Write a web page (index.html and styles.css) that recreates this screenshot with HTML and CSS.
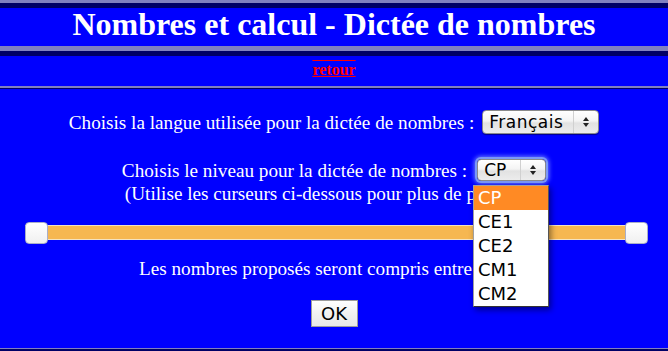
FILE: index.html
```html
<!DOCTYPE html>
<html lang="fr">
<head>
<meta charset="utf-8">
<title>Nombres et calcul - Dictée de nombres</title>
<link rel="stylesheet" href="styles.css">
</head>
<body>
<div class="rule rule-top"></div>
<h1 class="title">Nombres et calcul - Dictée de nombres</h1>
<div class="rule rule-mid"></div>
<div class="nav"><a href="#" class="back">retour</a></div>
<div class="rule rule-thin"></div>
<main class="content">
  <div class="row row-lang">
    <span class="label">Choisis la langue utilisée pour la dictée de nombres :</span>
    <div class="select select-lang">
      <span class="select-value">Français</span>
      <span class="select-arrows"><svg width="8" height="12" viewBox="0 0 8 12"><path d="M4 1 L7 5 H1 Z M4 11 L7 7 H1 Z" fill="#222"/></svg></span>
    </div>
  </div>
  <div class="row row-level">
    <span class="label">Choisis le niveau pour la dictée de nombres :</span>
    <div class="select select-level">
      <span class="select-value">CP</span>
      <span class="select-arrows"><svg width="8" height="12" viewBox="0 0 8 12"><path d="M4 1 L7 5 H1 Z M4 11 L7 7 H1 Z" fill="#222"/></svg></span>
    </div>
  </div>
  <p class="hint">(Utilise les curseurs ci-dessous pour plus de précision)</p>
  <div class="slider">
    <div class="track"></div>
    <span class="thumb thumb-min"></span>
    <span class="thumb thumb-max"></span>
  </div>
  <p class="range-text">Les nombres proposés seront compris entre 0 et 99</p>
  <button class="ok" type="button">OK</button>
</main>
<div class="rule rule-bottom"></div>
<ul class="dropdown">
  <li class="option active">CP</li>
  <li class="option">CE1</li>
  <li class="option">CE2</li>
  <li class="option">CM1</li>
  <li class="option">CM2</li>
</ul>
</body>
</html>
```
FILE: styles.css
```css
html, body {
  margin: 0;
  padding: 0;
}
body {
  background: #0000ff;
  position: relative;
  height: 351px;
  overflow: hidden;
  font-family: "Liberation Serif", "Times New Roman", serif;
  color: #ffffff;
}
.rule {
  height: 0;
}
.rule-top {
  border-top: 3px solid #8080c0;
  border-bottom: 5px solid #000066;
}
.rule-mid {
  border-top: 5px solid #8080c0;
  border-bottom: 5px solid #000066;
}
.rule-thin {
  border-top: 2px solid #8080c0;
  border-bottom: 1px solid #000066;
}
.rule-bottom {
  border-top: 1px solid #8080c0;
  border-bottom: 2px solid #000066;
}
.title {
  margin: 0;
  height: 38px;
  box-sizing: border-box;
  padding-bottom: 6px;
  font: bold 32px/32px "Liberation Serif", "Times New Roman", serif;
  text-align: center;
  color: #ffffff;
}
.nav {
  height: 30px;
  box-sizing: border-box;
  padding-top: 5px;
  text-align: center;
  font: bold 16px/18px "Liberation Serif", "Times New Roman", serif;
}
.back {
  color: #ff0000;
  text-decoration: underline overline;
}
.content {
  height: 259px;
  box-sizing: border-box;
  padding-top: 21px;
  display: flex;
  flex-direction: column;
  align-items: center;
  font-size: 19.2px;
  line-height: 23px;
}
.row {
  display: flex;
  align-items: center;
  height: 24px;
}
.row-level {
  margin-top: 24px;
}
.select {
  display: flex;
  box-sizing: border-box;
  border: 1px solid #8a8a8a;
  border-radius: 4px;
  background: linear-gradient(#ffffff, #f4f4f4 45%, #e2e2e2 55%, #ececec);
  box-shadow: 0 1px 1px rgba(0, 0, 0, 0.45);
  font: 17px/20px "DejaVu Sans", "Liberation Sans", sans-serif;
  color: #000000;
}
.select-lang {
  width: 117px;
  height: 24px;
  margin-left: 8px;
  letter-spacing: 0.5px;
}
.select-level {
  width: 69px;
  height: 22px;
  margin-left: 10px;
  box-shadow: 0 0 0 2px #7b98f6, 0 0 4px 3px rgba(150, 175, 255, 0.7);
}
.select-value {
  flex: 1;
  padding-left: 6px;
  line-height: 22px;
}
.select-level .select-value {
  line-height: 20px;
}
.select-arrows {
  width: 24px;
  display: flex;
  align-items: center;
  justify-content: center;
  border-left: 1px solid #d0d0d0;
}
.hint {
  margin: 0;
}
.slider {
  align-self: stretch;
  position: relative;
  height: 24px;
  margin: 16px 20px 0 25px;
  padding-top: 4px;
  box-sizing: border-box;
}
.track {
  height: 15px;
  margin-right: 3px;
  box-sizing: border-box;
  background: #f6b751;
  border-top: 1px solid #f3e2c2;
  border-bottom: 1px solid #f3e2c2;
}
.thumb {
  position: absolute;
  top: 1px;
  width: 23px;
  height: 22px;
  box-sizing: border-box;
  border: 1px solid #a9aec8;
  border-radius: 4px;
  background: linear-gradient(#ffffff, #f0f0f0);
}
.thumb-min {
  left: 0;
}
.thumb-max {
  right: 0;
}
.range-text {
  margin: 12px 0 0;
}
.ok {
  margin-top: 20px;
  width: 47px;
  height: 27px;
  padding: 0;
  box-sizing: border-box;
  border: 1px solid #9c9c9c;
  background: linear-gradient(#ffffff, #f2f2f2 50%, #e8e8e8);
  font: 18px/25px "DejaVu Sans", "Liberation Sans", sans-serif;
  color: #000000;
}
.dropdown {
  position: absolute;
  left: 473px;
  top: 185px;
  width: 76px;
  margin: 0;
  padding: 0;
  list-style: none;
  box-sizing: border-box;
  background: #ffffff;
  border: 1px solid #a0a0a0;
  border-right-color: #555555;
  border-bottom-color: #333333;
  box-shadow: 2px 3px 6px rgba(0, 0, 0, 0.45);
}
.option {
  height: 24px;
  padding-left: 4px;
  font: 18px/24px "DejaVu Sans", "Liberation Sans", sans-serif;
  color: #000000;
}
.option.active {
  background: #ff8a24;
  color: #ffffff;
}
```
